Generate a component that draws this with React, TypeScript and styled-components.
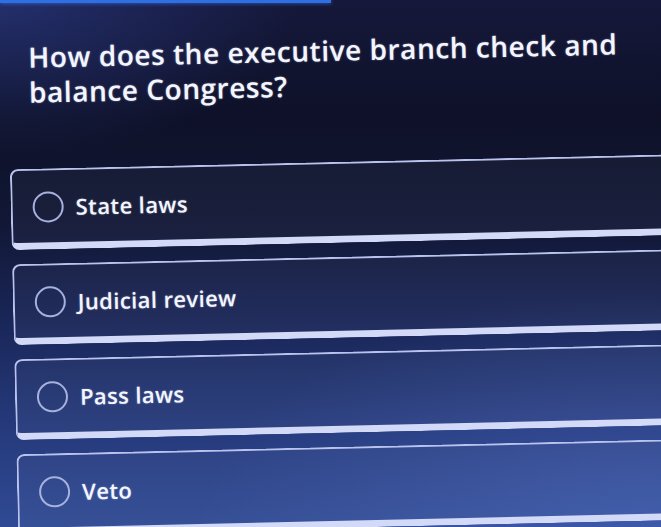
import React from "react";
import styled, { createGlobalStyle } from "styled-components";

const GlobalStyle = createGlobalStyle`
  html, body {
    margin: 0;
    padding: 0;
    background: #10132c;
    overflow: hidden;
  }
  * { box-sizing: border-box; }
`;

const Screen = styled.div`
  width: 661px;
  height: 527px;
  overflow: hidden;
  display: flex;
  flex-direction: column;
  font-family: "Open Sans", "Noto Sans", sans-serif;
  background:
    radial-gradient(ellipse 45% 30% at 0% 0%, rgba(48, 66, 150, 0.55), transparent 100%),
    radial-gradient(ellipse 70% 45% at 100% 100%, rgba(78, 108, 196, 0.45), transparent 100%),
    linear-gradient(180deg, #15183a 0%, #0e1128 22%, #111735 42%, #1a275a 62%, #25397a 80%, #2f4a94 100%);
`;

const Progress = styled.div`
  height: 3px;
  flex: none;
  display: flex;
`;

const ProgressFill = styled.div<{ $value: number }>`
  width: ${(p) => p.$value}%;
  background: #2f6fe4;
  box-shadow: 0 0 4px rgba(60, 130, 255, 0.8);
`;

const Stage = styled.div`
  flex: 1;
  display: flex;
  flex-direction: column;
  transform: rotate(-1.3deg);
  transform-origin: 330px 260px;
`;

const Question = styled.h1`
  margin: 0;
  padding: 30px 0 0 33px;
  width: 660px;
  font-size: 28px;
  line-height: 35px;
  font-weight: 600;
  color: #f4f6ff;
  text-shadow: 0 0 2px rgba(230, 236, 255, 0.45);
  letter-spacing: 0.55px;
`;

const Options = styled.div`
  display: flex;
  flex-direction: column;
  gap: 14px;
  margin-top: 59px;
  padding-left: 12px;
  width: 720px;
`;

const Option = styled.div`
  height: 81px;
  display: flex;
  align-items: center;
  gap: 12px;
  padding-left: 20px;
  border: 2px solid #b9c3ee;
  border-bottom: 7px solid #d3daf8;
  border-radius: 8px;
  background: rgba(255, 255, 255, 0.035);
`;

const Radio = styled.span`
  width: 31px;
  height: 31px;
  flex: none;
  border-radius: 50%;
  border: 2px solid #a6b1de;
`;

const Label = styled.span`
  font-size: 22px;
  font-weight: 600;
  letter-spacing: 0.4px;
  color: #f4f6ff;
  text-shadow: 0 0 2px rgba(230, 236, 255, 0.4);
`;

const answers = ["State laws", "Judicial review", "Pass laws", "Veto"];

export default function App() {
  return (
    <>
      <GlobalStyle />
      <Screen>
        <Progress>
          <ProgressFill $value={50} />
        </Progress>
        <Stage>
          <Question>How does the executive branch check and balance Congress?</Question>
          <Options>
            {answers.map((a) => (
              <Option key={a}>
                <Radio />
                <Label>{a}</Label>
              </Option>
            ))}
          </Options>
        </Stage>
      </Screen>
    </>
  );
}
